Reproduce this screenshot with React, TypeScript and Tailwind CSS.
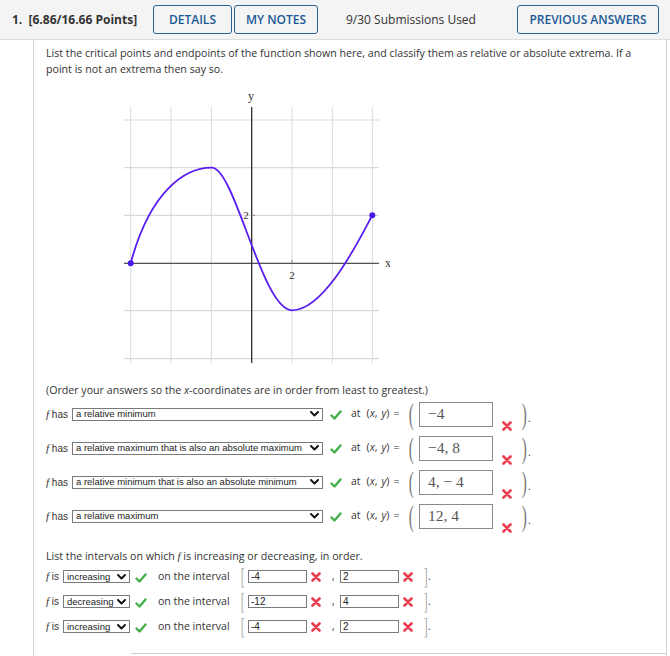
import React from "react";

const Check = () => (
  <svg width="12" height="10" viewBox="0 0 12 10">
    <path d="M1.5 5.5 L4.5 8.5 L10.5 1.5" fill="none" stroke="#43b04c" strokeWidth="2.4" strokeLinecap="round" strokeLinejoin="round" />
  </svg>
);

const Cross = () => (
  <svg width="10" height="10" viewBox="0 0 10 10">
    <path d="M1.5 1.5 L8.5 8.5 M8.5 1.5 L1.5 8.5" stroke="#ea3d50" strokeWidth="2.6" strokeLinecap="round" />
  </svg>
);

const Chevron = () => (
  <svg width="9" height="6" viewBox="0 0 9 6">
    <path d="M1 1 L4.5 4.5 L8 1" fill="none" stroke="#111" strokeWidth="1.9" strokeLinecap="round" strokeLinejoin="round" />
  </svg>
);

const Sel = ({ text, w }: { text: string; w: string }) => (
  <div className={`${w} h-[13px] border border-[#7a7a7a] flex items-center justify-between pl-[3px] pr-[3px] bg-white`}>
    <span className="font-['Liberation_Sans',sans-serif] text-[9.5px] leading-none text-[#222] whitespace-nowrap">{text}</span>
    <Chevron />
  </div>
);

const FItal = () => <i className="font-['Liberation_Serif',serif] text-[11px]">f</i>;

const Paren = ({ c }: { c: string }) => (
  <span className="inline-block font-['Liberation_Serif',serif] text-[19px] leading-none text-[#777] scale-y-[1.5] scale-x-[0.8]">{c}</span>
);

const Bracket = ({ c }: { c: string }) => (
  <span className="inline-block font-['Liberation_Serif',serif] text-[17px] leading-none text-[#aaa] scale-y-[1.35] scale-x-[0.7]">{c}</span>
);

const ExtRow = ({ sel, val }: { sel: string; val: string }) => (
  <div className="flex items-center h-[34px] text-[#333]">
    <span className="w-[26px] text-[10px] font-['Liberation_Sans',sans-serif] whitespace-nowrap">
      <FItal /> has
    </span>
    <Sel text={sel} w="w-[251px]" />
    <span className="ml-[7px] w-[12px] flex translate-y-[1px]"><Check /></span>
    <span className="ml-[9px] w-[57px] text-[10.5px] whitespace-nowrap flex">
      <span>at</span>
      <span className="ml-[6px]">(</span>
      <i>x</i>
      <span>,</span>
      <i className="ml-[4px]">y</i>
      <span>)</span>
      <span className="ml-[4px]">=</span>
    </span>
    <span className="w-[11px] flex justify-start"><Paren c="(" /></span>
    <div className="w-[74px] h-[25px] border border-[#8a8a8a] flex items-center pl-[8px] font-['Liberation_Serif',serif] text-[15.5px] text-[#555] whitespace-nowrap">
      {val}
    </div>
    <span className="ml-[9px] w-[10px] flex translate-y-[12px]"><Cross /></span>
    <span className="ml-[9px] w-[7px] flex"><Paren c=")" /></span>
    <span className="text-[10px] translate-y-[4px]">.</span>
  </div>
);

const SmallInput = ({ v }: { v: string }) => (
  <div className="w-[59px] h-[13px] border border-[#7a7a7a] flex items-center pl-[2px] font-['Liberation_Sans',sans-serif] text-[10px] leading-none text-[#222]">
    {v}
  </div>
);

const IntRow = ({ sel, a, b }: { sel: string; a: string; b: string }) => (
  <div className="flex items-center h-[25px] text-[#333]">
    <span className="w-[17px] text-[10px] font-['Liberation_Sans',sans-serif] whitespace-nowrap">
      <FItal /> is
    </span>
    <Sel text={sel} w="w-[67px]" />
    <span className="ml-[5px] w-[12px] flex translate-y-[1px]"><Check /></span>
    <span className="ml-[11px] w-[82px] text-[10.6px] whitespace-nowrap">on the interval</span>
    <span className="w-[8px] flex"><Bracket c="[" /></span>
    <SmallInput v={a} />
    <span className="ml-[4px] w-[10px] flex"><Cross /></span>
    <span className="ml-[11px] w-[8px] text-[10px]">,</span>
    <SmallInput v={b} />
    <span className="ml-[4px] w-[10px] flex"><Cross /></span>
    <span className="ml-[10px] w-[5px] flex"><Bracket c="]" /></span>
    <span className="text-[10px]">.</span>
  </div>
);

const Graph = () => {
  const xs = [130.7, 171, 211.3, 251.7, 292, 332.3, 372.3];
  const ys = [119, 166.7, 214.3, 262.3, 309.7, 357.7];
  return (
    <svg width="280" height="280" viewBox="110 88 280 280" className="block">
      {xs.map((x) => (
        <line key={"v" + x} x1={x} y1={106} x2={x} y2={362} stroke="#d9d9d9" strokeWidth="1" />
      ))}
      {ys.map((y) => (
        <line key={"h" + y} x1={124} y1={y} x2={379} y2={y} stroke="#d9d9d9" strokeWidth="1.2" />
      ))}
      <line x1={124} y1={262.3} x2={379} y2={262.3} stroke="#333" strokeWidth="1" />
      <line x1={251.7} y1={106} x2={251.7} y2={362} stroke="#222" strokeWidth="1.2" />
      <line x1={292} y1={259} x2={292} y2={262} stroke="#888" strokeWidth="1" />
      <line x1={251.7} y1={214.3} x2={255} y2={214.3} stroke="#888" strokeWidth="1" />
      <text x={251} y={99} fontFamily="Liberation Serif, serif" fontSize="12" textAnchor="middle" fill="#333">y</text>
      <text x={388} y={266} fontFamily="Liberation Serif, serif" fontSize="12" textAnchor="middle" fill="#333">x</text>
      <text x={292} y={278} fontFamily="Liberation Serif, serif" fontSize="11" textAnchor="middle" fill="#333">2</text>
      <text x={246} y={218} fontFamily="Liberation Serif, serif" fontSize="11" textAnchor="middle" fill="#333">2</text>
      <path
        d="M130.7 262.3 C150 190 185 166.7 211.7 166.7 C235 166.7 262 309.3 292 309.3 C325 309.3 360 237 372.3 214.3"
        fill="none"
        stroke="#5a1ff0"
        strokeWidth="1.8"
      />
      <circle cx={130.7} cy={262.3} r={3} fill="#4a1ae8" />
      <circle cx={372.3} cy={214.3} r={3} fill="#4a1ae8" />
    </svg>
  );
};

export default function App() {
  return (
    <div className="w-[670px] h-[656px] bg-white overflow-hidden font-['Open_Sans',sans-serif] text-[#333] flex flex-col">
      <div className="h-[40px] shrink-0 bg-[#f4f4f4] border-b border-[#dcdcdc] flex items-center pl-[12px]">
        <span className="text-[12px] font-bold text-[#333] w-[141px] whitespace-nowrap">1.&nbsp; [6.86/16.66 Points]</span>
        <div className="h-[29px] w-[79px] border border-[#2a6496] rounded-[3px] flex items-center justify-center text-[12px] font-semibold text-[#1a5a96]">
          DETAILS
        </div>
        <div className="ml-[2px] h-[29px] w-[84px] border border-[#2a6496] rounded-[3px] flex items-center justify-center text-[12px] font-semibold text-[#1a5a96]">
          MY NOTES
        </div>
        <span className="ml-[28px] w-[171px] text-[12px] text-[#333] whitespace-nowrap">9/30 Submissions Used</span>
        <div className="h-[29px] w-[142px] border border-[#2a6496] rounded-[3px] flex items-center justify-center text-[12px] font-semibold text-[#1a5a96]">
          PREVIOUS ANSWERS
        </div>
      </div>
      <div className="flex-1 ml-[33px] mr-[3px] border-l border-r border-[#d4d4d4] flex flex-col">
        <div className="pl-[12px] pt-[5px] flex flex-col">
          <p className="text-[10.65px] leading-[16px] text-[#333] w-[592px]">
            List the critical points and endpoints of the function shown here, and classify them as relative or absolute extrema. If a point is not an extrema then say so.
          </p>
          <div className="mt-[12px] ml-[64px]">
            <Graph />
          </div>
          <p className="mt-[14px] text-[10.65px] leading-[14px]">
            (Order your answers so the <i>x</i>-coordinates are in order from least to greatest.)
          </p>
          <ExtRow sel="a relative minimum" val="−4" />
          <ExtRow sel="a relative maximum that is also an absolute maximum" val="−4, 8" />
          <ExtRow sel="a relative minimum that is also an absolute minimum" val="4,  − 4" />
          <ExtRow sel="a relative maximum" val="12, 4" />
          <p className="mt-[15px] text-[10.65px] leading-[16px]">
            List the intervals on which <FItal /> is increasing or decreasing, in order.
          </p>
          <IntRow sel="increasing" a="-4" b="2" />
          <IntRow sel="decreasing" a="-12" b="4" />
          <IntRow sel="increasing" a="-4" b="2" />
        </div>
        <div className="mt-auto ml-[97px] border-t border-[#cfcfcf] h-[3px]" />
      </div>
    </div>
  );
}
